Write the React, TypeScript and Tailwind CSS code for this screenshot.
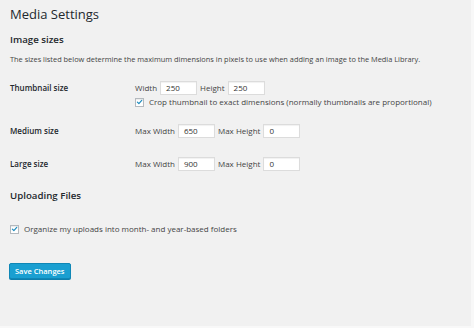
import React from "react";

function Check() {
  return (
    <span className="inline-flex w-[9px] h-[9px] shrink-0 items-center justify-center bg-white border border-[#b4b9be] shadow-[inset_0_1px_1px_rgba(0,0,0,0.08)]">
      <svg viewBox="0 0 10 10" className="w-[8px] h-[8px]">
        <path d="M2 5.2 L4.1 7.3 L8.2 2.6" fill="none" stroke="#1e8cbe" strokeWidth="1.7" strokeLinecap="round" strokeLinejoin="round" />
      </svg>
    </span>
  );
}

function Field({ value }: { value: string }) {
  return (
    <div className="w-[37px] h-[14px] bg-white border border-[#dcdcdc] shadow-[inset_0_1px_1px_rgba(0,0,0,0.06)] pl-[5px] text-[8px] leading-[12px] text-[#333]">
      {value}
    </div>
  );
}

export default function App() {
  return (
    <div className="w-[474px] h-[328px] bg-[#f8f8f8] font-['Open_Sans',sans-serif]">
      <div className="w-[471px] h-[326px] bg-[#f1f1f1] pl-[10px] pt-[6px] text-[#444]">
        <h1 className="text-[13px] leading-[16px] text-[#23282d]">Media Settings</h1>
        <h2 className="mt-[12px] text-[9.7px] leading-[12px] font-semibold text-[#23282d]">Image sizes</h2>
        <p className="mt-[8px] text-[7.4px] leading-[10px] text-[#444]">
          The sizes listed below determine the maximum dimensions in pixels to use when adding an image to the Media Library.
        </p>

        <div className="mt-[17px] flex items-center h-[14px]">
          <div className="w-[125px] text-[8px] font-semibold text-[#23282d]">Thumbnail size</div>
          <div className="flex items-center gap-[3px] text-[8px]">
            <span>Width</span>
            <Field value="250" />
            <span>Height</span>
            <Field value="250" />
          </div>
        </div>
        <div className="mt-[2px] ml-[125px] flex items-center gap-[5px] h-[10px] text-[8px] leading-[10px]">
          <Check />
          <span>Crop thumbnail to exact dimensions (normally thumbnails are proportional)</span>
        </div>

        <div className="mt-[17px] flex items-center h-[14px]">
          <div className="w-[125px] text-[8px] font-semibold text-[#23282d]">Medium size</div>
          <div className="flex items-center gap-[3px] text-[8px]">
            <span>Max Width</span>
            <Field value="650" />
            <span>Max Height</span>
            <Field value="0" />
          </div>
        </div>

        <div className="mt-[19px] flex items-center h-[14px]">
          <div className="w-[125px] text-[8px] font-semibold text-[#23282d]">Large size</div>
          <div className="flex items-center gap-[3px] text-[8px]">
            <span>Max Width</span>
            <Field value="900" />
            <span>Max Height</span>
            <Field value="0" />
          </div>
        </div>

        <h2 className="mt-[19px] text-[9.7px] leading-[12px] font-semibold text-[#23282d]">Uploading Files</h2>

        <div className="mt-[22px] flex items-center gap-[5px] h-[10px] text-[8px] leading-[10px]">
          <Check />
          <span>Organize my uploads into month- and year-based folders</span>
        </div>

        <div className="mt-[22px]">
          <button className="h-[16px] px-[5px] rounded-[2px] bg-[#1a9fd1] border border-[#0f87b6] shadow-[0_1px_0_#0e7fad] text-white text-[7.5px] font-semibold leading-[14px] -ml-[1px]">
            Save Changes
          </button>
        </div>
      </div>
    </div>
  );
}
